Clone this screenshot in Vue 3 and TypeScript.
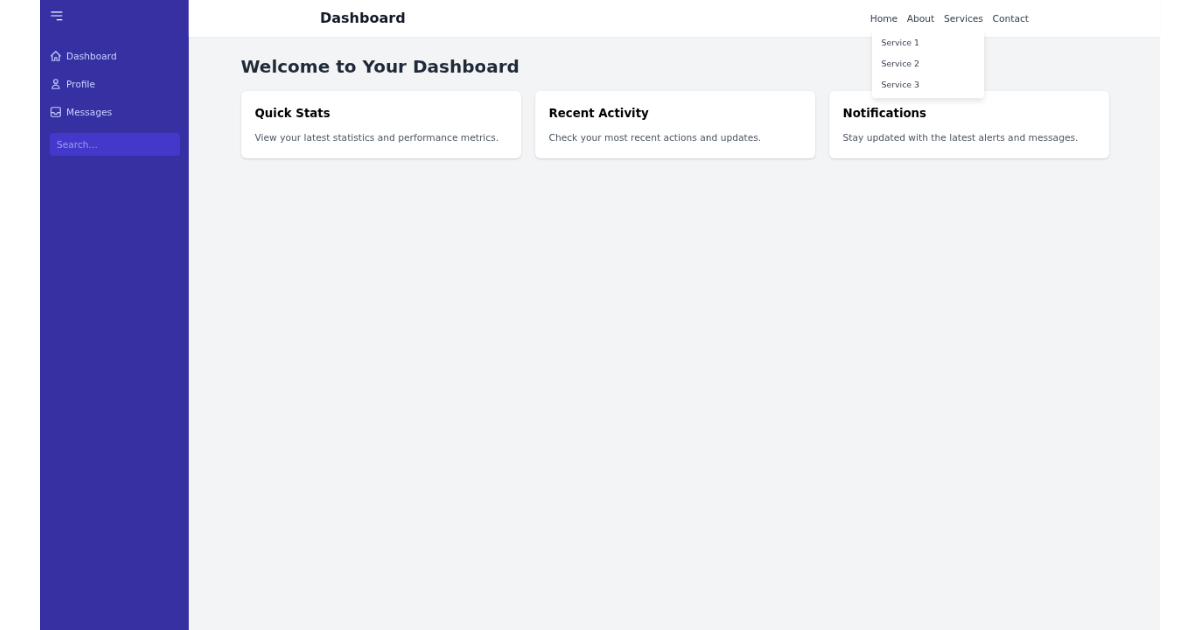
<template>
  <div class="stage">
    <div class="shell">
      <aside class="sidebar">
        <button class="menu-btn" aria-label="Menu">
          <svg width="14" height="14" viewBox="0 0 24 24" fill="none" stroke="currentColor" stroke-width="2">
            <path d="M1 5h22M1 12h22M12 20h11" />
          </svg>
        </button>
        <nav class="side-nav">
          <a v-for="item in sideItems" :key="item.label" class="side-link">
            <svg width="14" height="14" viewBox="0 0 24 24" fill="none" stroke="currentColor" stroke-width="2" stroke-linecap="round" stroke-linejoin="round">
              <path :d="item.icon" />
            </svg>
            {{ item.label }}
          </a>
        </nav>
        <input class="search" type="text" placeholder="Search..." />
      </aside>

      <div class="main">
        <header class="topbar">
          <h1>Dashboard</h1>
          <nav class="top-nav">
            <a>Home</a>
            <a>About</a>
            <div class="has-menu">
              <a>Services</a>
              <div class="dropdown">
                <a v-for="s in services" :key="s">{{ s }}</a>
              </div>
            </div>
            <a>Contact</a>
          </nav>
        </header>

        <main class="content">
          <h2>Welcome to Your Dashboard</h2>
          <div class="cards">
            <section v-for="card in cards" :key="card.title" class="card">
              <h3>{{ card.title }}</h3>
              <p>{{ card.text }}</p>
            </section>
          </div>
        </main>
      </div>
    </div>
  </div>
</template>

<script setup lang="ts">
interface SideItem {
  label: string
  icon: string
}

interface Card {
  title: string
  text: string
}

const sideItems: SideItem[] = [
  { label: 'Dashboard', icon: 'M3 12l9-9 9 9M5 10v11h5v-6h4v6h5V10' },
  { label: 'Profile', icon: 'M16 7a4 4 0 1 1-8 0 4 4 0 0 1 8 0zM12 14a7 7 0 0 0-7 7h14a7 7 0 0 0-7-7z' },
  { label: 'Messages', icon: 'M5 3h14a2 2 0 0 1 2 2v14a2 2 0 0 1-2 2H5a2 2 0 0 1-2-2V5a2 2 0 0 1 2-2zM3 13h5l2 3h4l2-3h5' }
]

const services: string[] = ['Service 1', 'Service 2', 'Service 3']

const cards: Card[] = [
  { title: 'Quick Stats', text: 'View your latest statistics and performance metrics.' },
  { title: 'Recent Activity', text: 'Check your most recent actions and updates.' },
  { title: 'Notifications', text: 'Stay updated with the latest alerts and messages.' }
]
</script>

<style>
html,
body {
  margin: 0;
  background: #fff;
  overflow: hidden;
}
</style>

<style scoped>
/* the design is 1280x720, shown at 0.875 in the middle of the window */
.stage {
  width: 1200px;
  height: 630px;
  padding-left: 40px;
  box-sizing: border-box;
  overflow: hidden;
}

.shell {
  display: flex;
  width: 1280px;
  height: 720px;
  font-family: 'DejaVu Sans', sans-serif;
  transform: scale(0.875);
  transform-origin: 0 0;
  will-change: transform;
}

.sidebar {
  width: 170px;
  flex-shrink: 0;
  box-sizing: border-box;
  padding: 11px 11px 0;
  background: #3730a3;
  color: #c7d2fe;
}

.menu-btn {
  display: block;
  padding: 0;
  margin: 0 0 0 1px;
  height: 14px;
  border: none;
  background: none;
  color: #fff;
}

.side-nav {
  display: flex;
  flex-direction: column;
  margin-top: 23px;
}

.side-link {
  display: flex;
  align-items: center;
  gap: 5px;
  height: 32px;
  font-size: 10.67px;
}

.search {
  display: block;
  width: 149px;
  height: 26px;
  margin-top: 8px;
  box-sizing: border-box;
  padding: 0 8px;
  border: none;
  border-radius: 4px;
  background: #4338ca;
  color: #fff;
  font-family: inherit;
  font-size: 10.67px;
}

.search::placeholder {
  color: #9a9df0;
}

.main {
  flex: 1;
  min-width: 0;
  background: #f3f4f6;
}

.topbar {
  display: flex;
  align-items: center;
  justify-content: space-between;
  height: 42px;
  padding: 0 150px;
  background: #fff;
  box-shadow: 0 1px 2px rgba(0, 0, 0, 0.05);
  position: relative;
}

h1 {
  margin: 0 0 2px;
  font-size: 16px;
  font-weight: 700;
  color: #111827;
}

.top-nav {
  display: flex;
  gap: 10.67px;
  font-size: 10.67px;
  color: #374151;
}

.has-menu {
  position: relative;
}

.dropdown {
  position: absolute;
  top: 18.5px;
  left: -82px;
  width: 128px;
  padding: 4px 0 3px;
  display: flex;
  flex-direction: column;
  background: #fff;
  border-radius: 4px;
  box-shadow: 0 4px 6px rgba(0, 0, 0, 0.1);
}

.dropdown a {
  height: 24px;
  line-height: 24px;
  padding-left: 10.67px;
  font-size: 9.33px;
}

.content {
  width: 992px;
  margin: 0 0 0 59.5px;
  padding-top: 22px;
}

h2 {
  margin: 0 0 16px;
  font-size: 20px;
  line-height: 24px;
  font-weight: 700;
  color: #1f2937;
}

.cards {
  display: grid;
  grid-template-columns: repeat(3, 320px);
  gap: 16px;
}

.card {
  padding: 17px 16px 15px;
  background: #fff;
  border-radius: 6px;
  box-shadow: 0 1px 3px rgba(0, 0, 0, 0.1), 0 1px 2px rgba(0, 0, 0, 0.06);
}

h3 {
  margin: 0 0 10.67px;
  font-size: 13.33px;
  line-height: 18px;
  font-weight: 700;
  color: #000;
}

p {
  margin: 0;
  font-size: 10.67px;
  line-height: 16px;
  color: #4b5563;
}
</style>
